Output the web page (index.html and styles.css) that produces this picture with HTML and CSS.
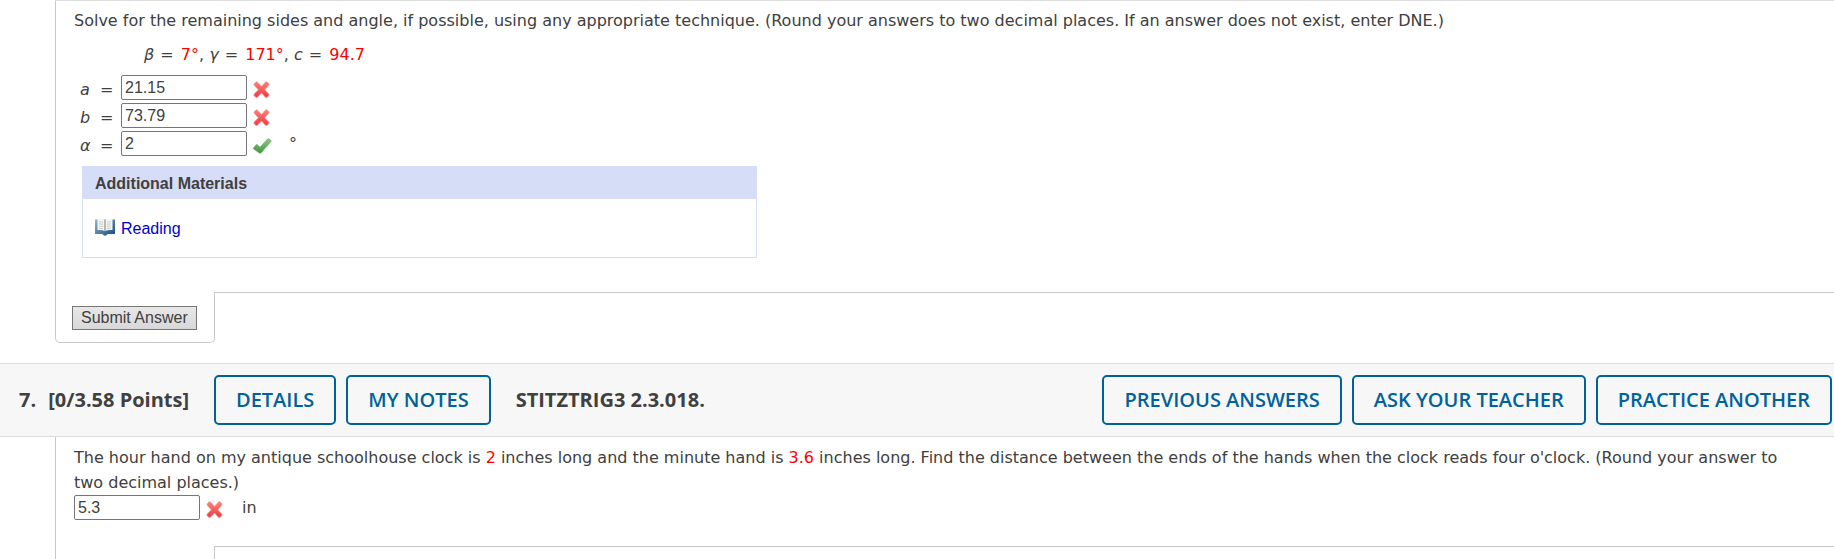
FILE: index.html
```html
<!DOCTYPE html>
<html lang="en">

<head>
    <meta charset="UTF-8">
    <meta name="viewport" content="width=device-width, initial-scale=1.0">
    <title>Homework</title>
    <link rel="stylesheet" href="styles.css">
</head>

<body>
    <!-- shared icons -->
    <svg class="defs" aria-hidden="true">
        <defs>
            <linearGradient id="red" x1="0" y1="0" x2="0" y2="1">
                <stop offset="0" stop-color="#ff8078" />
                <stop offset="1" stop-color="#f03a40" />
            </linearGradient>
            <linearGradient id="green" x1="0" y1="0" x2="0" y2="1">
                <stop offset="0" stop-color="#8fcb86" />
                <stop offset="1" stop-color="#3f9140" />
            </linearGradient>
            <linearGradient id="blue" x1="0" y1="0" x2="1" y2="1">
                <stop offset="0" stop-color="#8fb8d8" />
                <stop offset="1" stop-color="#16467a" />
            </linearGradient>
            <symbol id="wrong" viewBox="0 0 20 20">
                <path d="M4 2Q5 1.500 6 2.500L9.500 6.500l3.700-4.200q1-1 2-.4l1.500 1.500q.8 1-.2 2L12.700 9.700l3.900 4.100q.8 1 0 2l-1.400 1.500q-1 .7-2-.3L9.500 13l-3.800 4.100q-1 .9-2 .2L2.200 15.800q-.7-1 .2-2L6.300 9.800 2.400 5.500q-.8-1 0-2z" fill="url(#red)" stroke="#f39a98" stroke-width=".7" />
            </symbol>
            <symbol id="right" viewBox="0 0 20 20">
                <path d="M1.500 11.800l2.600-3q.7-.5 1.300 0L8 11.200 15.500 3.100q.7-.6 1.400-.2l1.900 1.400q.6.600.1 1.300L9.200 16.800q-1.100 1-2.200 0L1.600 13q-.5-.6-.1-1.200z" fill="url(#green)" stroke="#6fae6c" stroke-width=".7" />
            </symbol>
            <symbol id="book" viewBox="0 0 20 18">
                <path d="M0 1.500h20v14.500h-7.500q-.5 1.700-2.500 1.700T7.500 16H0z" fill="url(#blue)" />
                <path d="M2.500 1.200q4-1 7.500.6 3.500-1.600 7.500-.6v10.800q-4-.5-7.500 1.100-3.500-1.600-7.500-1.100z" fill="#f5f5f2" />
                <path d="M9 1.800h2v11l-1 .5-1-.5z" fill="#b4b8ba" />
                <path d="M4 3.500l4 .7M4 5.700l4 .7M4 7.900l4 .7M4 10.100l4 .7M12 4.200l4-.7M12 6.400l4-.7M12 8.600l4-.7M12 10.800l4-.7" stroke="#cacac6" fill="none" />
            </symbol>
        </defs>
    </svg>

    <div class="question first">
        <div class="content">
            <p>Solve for the remaining sides and angle, if possible, using any appropriate technique. (Round your answers to two decimal places. If an answer does not exist, enter DNE.)</p>
            <p class="given"><i>β</i> <span class="eq">=</span> <span class="red">7°</span>, <i>γ</i> <span class="eq">=</span> <span class="red">171°</span>, <i>c</i> <span class="eq">=</span> <span class="red">94.7</span></p>
            <div class="answers">
                <div class="answer">
                    <label for="side-a"><i>a</i><span>=</span></label>
                    <input type="text" id="side-a" value="21.15">
                    <svg class="mark" role="img" aria-label="Incorrect"><use href="#wrong" /></svg>
                </div>
                <div class="answer">
                    <label for="side-b"><i>b</i><span>=</span></label>
                    <input type="text" id="side-b" value="73.79">
                    <svg class="mark" role="img" aria-label="Incorrect"><use href="#wrong" /></svg>
                </div>
                <div class="answer">
                    <label for="alpha"><i>α</i><span>=</span></label>
                    <input type="text" id="alpha" value="2">
                    <svg class="mark" role="img" aria-label="Correct"><use href="#right" /></svg>
                    <span class="unit">°</span>
                </div>
            </div>
            <div class="materials">
                <h3>Additional Materials</h3>
                <div class="links">
                    <svg class="book" aria-hidden="true"><use href="#book" /></svg>
                    <a href="#">Reading</a>
                </div>
            </div>
        </div>
        <div class="footer">
            <div class="tab">
                <button type="button" class="submit">Submit Answer</button>
            </div>
            <div class="line"></div>
        </div>
    </div>

    <div class="header">
        <div class="points"><span>7.</span><span>[0/3.58 Points]</span></div>
        <button type="button">DETAILS</button>
        <button type="button">MY NOTES</button>
        <span class="name">STITZTRIG3 2.3.018.</span>
        <div class="actions">
            <button type="button">PREVIOUS ANSWERS</button>
            <button type="button">ASK YOUR TEACHER</button>
            <button type="button">PRACTICE ANOTHER</button>
        </div>
    </div>

    <div class="question">
        <div class="content">
            <p><label for="distance">The hour hand on my antique schoolhouse clock is <span class="red">2</span> inches long and the minute hand is <span class="red">3.6</span> inches long. Find the distance between the ends of the hands when the clock reads four o'clock. (Round your answer to two decimal places.)</label></p>
            <div class="answer">
                <input type="text" id="distance" value="5.3">
                <svg class="mark" role="img" aria-label="Incorrect"><use href="#wrong" /></svg>
                <span class="unit">in</span>
            </div>
        </div>
        <div class="footer next">
            <div class="tab-open"></div>
            <div class="line"></div>
        </div>
    </div>
</body>

</html>
```

FILE: styles.css
```css
* {
    box-sizing: border-box;
}
body {
    margin: 0;
    background: #fff;
    color: #404040;
    font-family: Verdana, "DejaVu Sans", sans-serif;
    font-size: 16px;
    line-height: 25px;
}
p {
    margin: 0;
}
.defs {
    display: block;
    width: 0;
    height: 0;
}
.red {
    color: #f00;
}

/* question body */
.question {
    margin-left: 55px;
}
.first {
    border-top: 1px solid #ddd;
}
.content {
    border-left: 1px solid #c8c8c8;
    padding: 8px 40px 26px 18px;
}
.first .content {
    padding-top: 7px;
    padding-bottom: 34px;
}
.given {
    padding: 9px 0 8px 70px;
}
.eq {
    margin: 0 2px 0 1px;
}
.answers {
    display: flex;
    flex-direction: column;
    gap: 3px;
    padding-left: 6px;
}
.answer {
    display: flex;
    align-items: center;
    height: 25px;
}
.answer label {
    display: flex;
    width: 41px;
    padding-top: 3px;
}
.answer label i {
    width: 20px;
}
.answer input {
    width: 126px;
    height: 25px;
    padding: 0 3px;
    border: 1px solid #767676;
    border-radius: 2px;
    background: #fff;
    color: #404040;
    font-family: "Liberation Sans", Arial, sans-serif;
    font-size: 16px;
}
.mark {
    width: 20px;
    height: 20px;
    margin: 4px 0 0 5px;
}
.unit {
    margin-left: 17px;
}

/* additional materials */
.materials {
    max-width: 675px;
    margin: 10px 0 0 8px;
    border: 1px solid #d6ddf7;
    font-family: "Liberation Sans", Arial, sans-serif;
}
.materials h3 {
    margin: 0;
    padding: 5px 12px 3px;
    background: #d6ddf7;
    font-size: 16px;
    line-height: 24px;
}
.links {
    display: flex;
    align-items: center;
    gap: 6px;
    padding: 17px 12px 16px;
}
.links a {
    color: #0000d0;
    text-decoration: none;
}
.book {
    width: 20px;
    height: 18px;
    margin-bottom: 4px;
}

/* submit tab */
.footer {
    display: flex;
}
.tab {
    width: 160px;
    height: 51px;
    padding: 14px 0 0 16px;
    border: 1px solid #c8c8c8;
    border-top: none;
    border-radius: 0 0 5px 5px;
}
.tab-open {
    width: 160px;
    border-left: 1px solid #c8c8c8;
    border-right: 1px solid #c8c8c8;
}
.line {
    flex: 1;
    border-top: 1px solid #c8c8c8;
}
.next {
    height: 13px;
}
.submit {
    display: block;
    height: 24px;
    padding: 0 8px;
    border: 1px solid #767676;
    background: linear-gradient(#e8e8e8, #d8d8d8);
    color: #404040;
    font-family: "Liberation Sans", Arial, sans-serif;
    font-size: 16px;
    white-space: nowrap;
}

/* question header bar */
.header {
    display: flex;
    align-items: center;
    gap: 10px;
    height: 74px;
    margin-top: 20px;
    padding: 0 2px 0 19px;
    border-top: 1px solid #ddd;
    border-bottom: 1px solid #ddd;
    background: #f7f7f7;
    font-family: "Open Sans", sans-serif;
    font-size: 20px;
    font-weight: 700;
    white-space: nowrap;
}
.header button {
    height: 50px;
    padding: 0 20px 2px;
    border: 2px solid #00629b;
    border-radius: 5px;
    background: transparent;
    color: #00629b;
    font-family: "Open Sans", sans-serif;
    font-size: 20px;
    font-weight: 600;
    cursor: pointer;
}
.points,
.name {
    padding-bottom: 2px;
}
.points {
    display: flex;
    gap: 12px;
    width: 185px;
}
.name {
    margin-left: 15px;
}
.actions {
    display: flex;
    gap: 10px;
    margin-left: auto;
}
```
